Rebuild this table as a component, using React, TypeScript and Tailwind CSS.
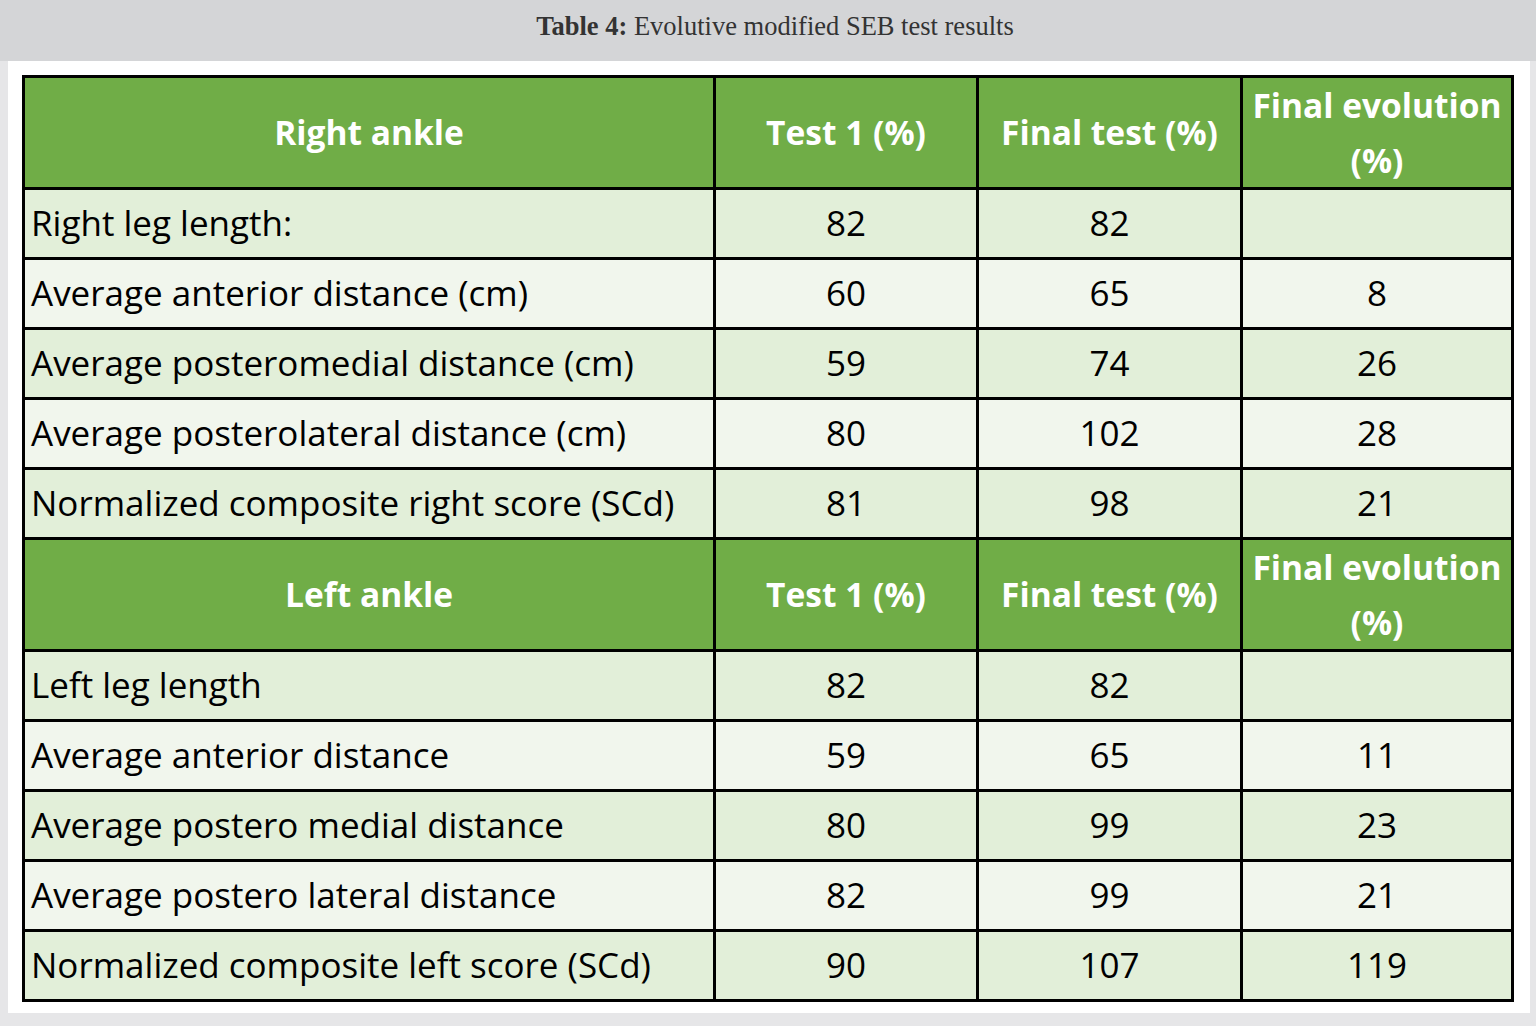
const font = { fontFamily: '"Open Sans", "Noto Sans", sans-serif' };

type Row = { label: string; t1: string; ft: string; ev: string };

const right: Row[] = [
  { label: 'Right leg length:', t1: '82', ft: '82', ev: '' },
  { label: 'Average anterior distance (cm)', t1: '60', ft: '65', ev: '8' },
  { label: 'Average posteromedial distance (cm)', t1: '59', ft: '74', ev: '26' },
  { label: 'Average posterolateral distance (cm)', t1: '80', ft: '102', ev: '28' },
  { label: 'Normalized composite right score (SCd)', t1: '81', ft: '98', ev: '21' },
];

const left: Row[] = [
  { label: 'Left leg length', t1: '82', ft: '82', ev: '' },
  { label: 'Average anterior distance', t1: '59', ft: '65', ev: '11' },
  { label: 'Average postero medial distance', t1: '80', ft: '99', ev: '23' },
  { label: 'Average postero lateral distance', t1: '82', ft: '99', ev: '21' },
  { label: 'Normalized composite left score (SCd)', t1: '90', ft: '107', ev: '119' },
];

function HeaderRow({ title }: { title: string }) {
  const th = 'border-[3px] border-black bg-[#70ad47] text-white font-bold text-center align-middle text-[33.5px] leading-[54.5px] h-[110px]';
  return (
    <tr>
      <th className={th}>{title}</th>
      <th className={th}>Test 1 (%)</th>
      <th className={th}>Final test (%)</th>
      <th className={th}>
        Final evolution
        <br />
        (%)
      </th>
    </tr>
  );
}

function BodyRows({ rows }: { rows: Row[] }) {
  return (
    <>
      {rows.map((r, i) => {
        const bg = i % 2 === 0 ? 'bg-[#e2efd9]' : 'bg-[#f1f6ed]';
        const td = `border-[3px] border-black text-black text-[35px] h-[70px] align-middle ${bg}`;
        return (
          <tr key={r.label}>
            <td className={`${td} pl-[6px] text-left whitespace-nowrap`}>{r.label}</td>
            <td className={`${td} text-center`}>{r.t1}</td>
            <td className={`${td} text-center`}>{r.ft}</td>
            <td className={`${td} text-center`}>{r.ev}</td>
          </tr>
        );
      })}
    </>
  );
}

export default function App() {
  return (
    <div className="w-[1536px] h-[1026px] bg-[#e6e6e8] flex flex-col overflow-hidden">
      <div className="h-[61px] bg-[#d4d5d7] flex items-center justify-center pb-[8px] pl-[14px] text-[26.5px] text-[#333]" style={{ fontFamily: '"Liberation Serif", serif' }}>
        <span>
          <b>Table 4:</b> Evolutive modified SEB test results
        </span>
      </div>
      <div className="ml-[8px] w-[1522px] h-[952px] bg-white pt-[14px] pl-[14px]">
        <table className="border-collapse w-[1489px] table-fixed" style={font}>
          <colgroup>
            <col className="w-[691px]" />
            <col className="w-[263px]" />
            <col className="w-[264px]" />
            <col className="w-[271px]" />
          </colgroup>
          <tbody>
            <HeaderRow title="Right ankle" />
            <BodyRows rows={right} />
            <HeaderRow title="Left ankle" />
            <BodyRows rows={left} />
          </tbody>
        </table>
      </div>
    </div>
  );
}
